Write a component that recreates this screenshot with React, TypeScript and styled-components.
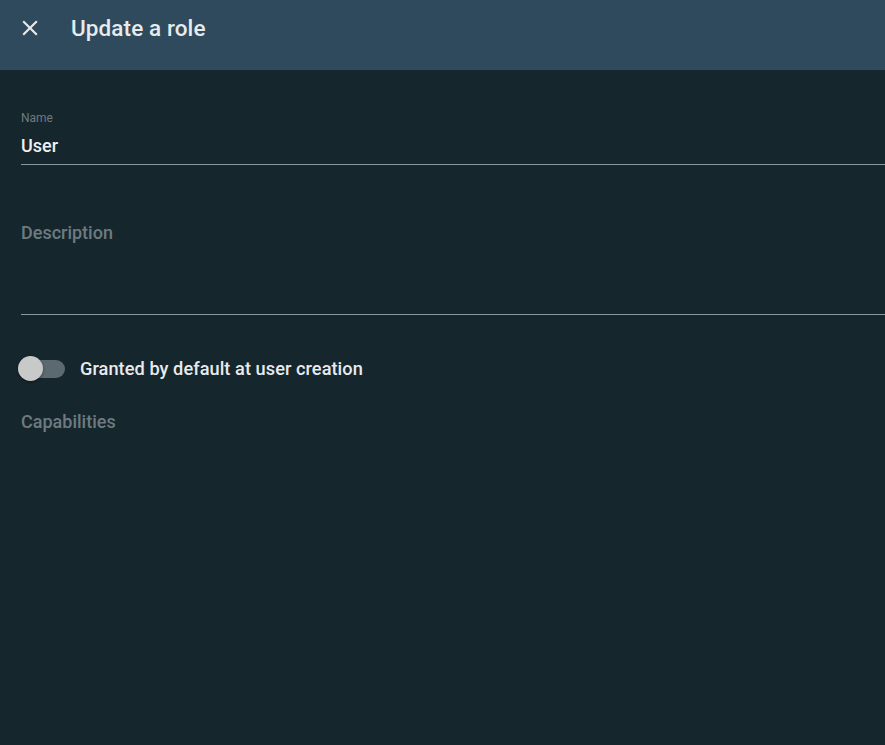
import React, { useState } from "react";
import styled, { createGlobalStyle } from "styled-components";

const GlobalStyle = createGlobalStyle`
  html, body {
    margin: 0;
    padding: 0;
    background-color: #16262d;
    font-family: Roboto, "Liberation Sans", Arial, sans-serif;
  }
  * { box-sizing: border-box; }
`;

const Page = styled.div`
  width: 100%;
  min-height: 100vh;
  background-color: #16262d;
  color: #e8eaec;
  overflow: hidden;
`;

const Header = styled.header`
  height: 70px;
  background-color: #2e4a5c;
`;

const Toolbar = styled.div`
  height: 56px;
  display: flex;
  align-items: center;
  padding-left: 17px;
  gap: 28px;
`;

const CloseButton = styled.button`
  width: 26px;
  height: 26px;
  border: 0;
  padding: 0;
  background: transparent;
  color: #e8eaec;
  display: flex;
  align-items: center;
  justify-content: center;
  cursor: pointer;
`;

const Title = styled.h1`
  margin: 0;
  font-size: 22.5px;
  font-weight: 500;
  color: #e8eaec;
  letter-spacing: 0.1px;
`;

const Form = styled.div`
  padding: 0 0 0 21px;
  display: flex;
  flex-direction: column;
`;

const Field = styled.div<{ $height: number }>`
  height: ${(p) => p.$height}px;
  border-bottom: 1.5px solid #8a979c;
  display: flex;
  flex-direction: column;
  margin-right: -10px;
`;

const SmallLabel = styled.label`
  font-size: 12px;
  color: #6d7b81;
  margin-top: 41px;
  line-height: 14px;
`;

const Value = styled.div`
  font-size: 18px;
  font-weight: 500;
  color: #eef0f1;
  margin-top: 10px;
  line-height: 22px;
`;

const Placeholder = styled.div`
  font-size: 18px;
  font-weight: 500;
  color: #6d7b81;
  margin-top: 57px;
  line-height: 22px;
`;

const SwitchRow = styled.label`
  display: flex;
  align-items: center;
  gap: 15px;
  margin-top: 43px;
  margin-left: -3px;
  cursor: pointer;
`;

const Track = styled.span<{ $on: boolean }>`
  position: relative;
  width: 47px;
  height: 18px;
  border-radius: 9px;
  background-color: ${(p) => (p.$on ? "#4f7fa0" : "#5b6a70")};
  flex-shrink: 0;
`;

const Thumb = styled.span<{ $on: boolean }>`
  position: absolute;
  top: -4px;
  left: ${(p) => (p.$on ? "22px" : "0px")};
  width: 25px;
  height: 25px;
  border-radius: 50%;
  background-color: #c8c9c9;
  box-shadow: 0 1px 3px rgba(0, 0, 0, 0.4);
`;

const SwitchLabel = styled.span`
  font-size: 18.2px;
  font-weight: 500;
  color: #e8eaec;
  letter-spacing: 0.05px;
`;

const SectionTitle = styled.div`
  font-size: 18px;
  font-weight: 500;
  color: #6d7b81;
  margin-top: 32px;
`;

export default function App() {
  const [granted, setGranted] = useState(false);

  return (
    <Page>
      <GlobalStyle />
      <Header>
        <Toolbar>
          <CloseButton aria-label="close">
            <svg width="26" height="26" viewBox="0 0 24 24" fill="currentColor">
              <path d="M19 6.41 17.59 5 12 10.59 6.41 5 5 6.41 10.59 12 5 17.59 6.41 19 12 13.41 17.59 19 19 17.59 13.41 12z" />
            </svg>
          </CloseButton>
          <Title>Update a role</Title>
        </Toolbar>
      </Header>
      <Form>
        <Field $height={95}>
          <SmallLabel>Name</SmallLabel>
          <Value>User</Value>
        </Field>
        <Field $height={150}>
          <Placeholder>Description</Placeholder>
        </Field>
        <SwitchRow onClick={() => setGranted(!granted)}>
          <Track $on={granted}>
            <Thumb $on={granted} />
          </Track>
          <SwitchLabel>Granted by default at user creation</SwitchLabel>
        </SwitchRow>
        <SectionTitle>Capabilities</SectionTitle>
      </Form>
    </Page>
  );
}
